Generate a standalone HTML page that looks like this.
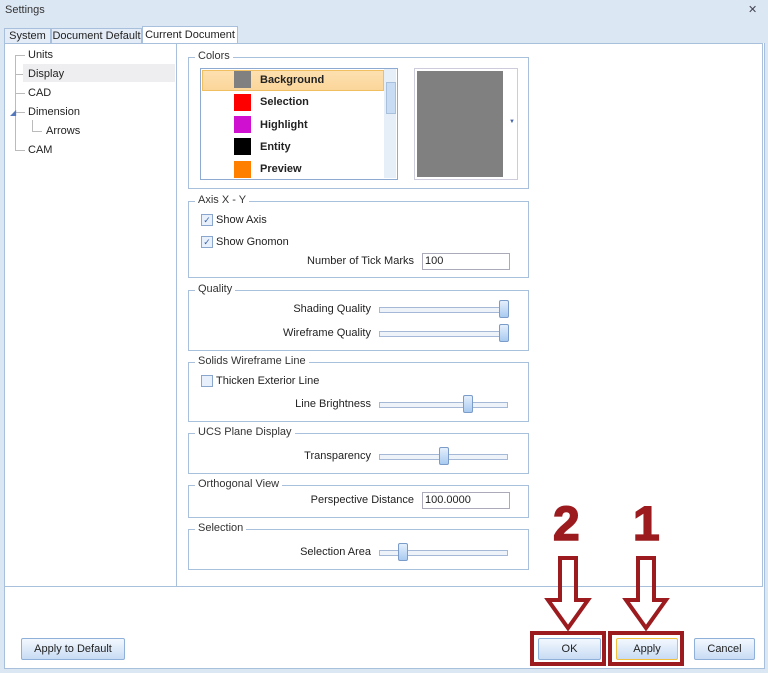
<!DOCTYPE html><html><head><style>
body{margin:0;width:768px;height:673px;position:relative;background:#fff;font-family:"Liberation Sans",sans-serif;font-size:11px;color:#222;overflow:hidden}
.a{position:absolute}
.grp{position:absolute;border:1px solid #a9c0dd;left:188px;width:339px}
.grp .t{position:absolute;top:-8px;left:6px;background:#fff;padding:0 3px;color:#333}
.trk{position:absolute;height:4px;border:1px solid #a5b9d6;background:#eef3fa;width:127px;left:379px}
.th{position:absolute;width:8px;height:16px;border:1px solid #7b9cc8;border-radius:2px;background:linear-gradient(#e4effc,#a9caf0)}
.lbl{position:absolute;text-align:right;width:200px}
.btn{position:absolute;height:20px;border:1px solid #8fb0d8;border-radius:2px;background:linear-gradient(#f3f8fe,#c8dcf4);text-align:center;line-height:20px;font-size:11px}
.cb{position:absolute;width:10px;height:10px;border:1px solid #8aa6cc;background:#e8f0fb;font-size:9px;line-height:10px;text-align:center;color:#3a63a8}
.sw{position:absolute;left:234px;width:17px;height:17px}
.it{position:absolute;left:260px;font-weight:bold}
.rb{position:absolute;border:4px solid #9b1b1f}
.num{position:absolute;font-size:48px;font-weight:bold;color:#9b1b1f;line-height:46px;-webkit-text-stroke:1.5px #9b1b1f}
</style></head><body>
<div class="a" style="left:0;top:0;width:768px;height:673px;background:#dce7f4"></div>
<div class="a" style="left:5px;top:4px;color:#333">Settings</div>
<div class="a" style="left:748px;top:3px;color:#445">✕</div>
<div class="a" style="left:4px;top:28px;width:45px;height:14px;border:1px solid #a9c0dd;background:#e4ecf7;text-align:center;line-height:14px">System</div>
<div class="a" style="left:51px;top:28px;width:89px;height:14px;border:1px solid #a9c0dd;background:#e4ecf7;text-align:center;line-height:14px">Document Default</div>
<div class="a" style="left:142px;top:26px;width:94px;height:17px;border:1px solid #a9c0dd;border-bottom:none;background:#fff;text-align:center;line-height:17px">Current Document</div>
<div class="a" style="left:4px;top:43px;width:759px;height:625px;background:#fff;border:1px solid #a9c0dd;border-top:none"></div>
<div class="a" style="left:4px;top:43px;width:759px;height:544px;border:1px solid #a9c0dd;box-sizing:border-box"></div>
<div class="a" style="left:176px;top:43px;width:1px;height:544px;background:#a9c0dd"></div>
<div class="a" style="left:15px;top:55px;width:1px;height:96px;background:#bbb"></div>
<div class="a" style="left:15px;top:55px;width:10px;height:1px;background:#bbb"></div>
<div class="a" style="left:15px;top:74px;width:10px;height:1px;background:#bbb"></div>
<div class="a" style="left:15px;top:93px;width:10px;height:1px;background:#bbb"></div>
<div class="a" style="left:15px;top:112px;width:10px;height:1px;background:#bbb"></div>
<div class="a" style="left:15px;top:150px;width:10px;height:1px;background:#bbb"></div>
<div class="a" style="left:32px;top:120px;width:1px;height:12px;background:#bbb"></div>
<div class="a" style="left:32px;top:131px;width:10px;height:1px;background:#bbb"></div>
<div class="a" style="left:10px;top:108px;color:#5577bb;font-size:8px">◢</div>
<div class="a" style="left:23px;top:64px;width:152px;height:18px;background:#eeeef0"></div>
<div class="a" style="left:28px;top:49px">Units</div>
<div class="a" style="left:28px;top:68px">Display</div>
<div class="a" style="left:28px;top:87px">CAD</div>
<div class="a" style="left:28px;top:106px">Dimension</div>
<div class="a" style="left:46px;top:125px">Arrows</div>
<div class="a" style="left:28px;top:144px">CAM</div>
<div class="grp" style="top:57px;height:130px"><span class="t">Colors</span></div>
<div class="a" style="left:200px;top:68px;width:196px;height:110px;border:1px solid #8faad0"></div>
<div class="a" style="left:202px;top:70px;width:180px;height:19px;background:linear-gradient(#fde0b0,#fbd69a);border:1px solid #f0c060"></div>
<div class="a" style="left:384px;top:69px;width:12px;height:109px;background:#e6eef8"></div>
<div class="a" style="left:386px;top:82px;width:8px;height:30px;background:#c8dcf4;border:1px solid #a9c0dd"></div>
<div class="sw" style="top:71px;background:#808080"></div><div class="it" style="top:74px">Background</div>
<div class="sw" style="top:94px;background:#f00"></div><div class="it" style="top:96px">Selection</div>
<div class="sw" style="top:116px;background:#d010d0"></div><div class="it" style="top:119px">Highlight</div>
<div class="sw" style="top:138px;background:#000"></div><div class="it" style="top:141px">Entity</div>
<div class="sw" style="top:161px;background:#ff8000"></div><div class="it" style="top:163px">Preview</div>
<div class="a" style="left:414px;top:68px;width:102px;height:110px;border:1px solid #ccd"></div>
<div class="a" style="left:417px;top:71px;width:86px;height:106px;background:#808080"></div>
<div class="a" style="left:509px;top:119px;font-size:6px;color:#4466aa">▼</div>
<div class="grp" style="top:201px;height:75px"><span class="t">Axis X - Y</span></div>
<div class="cb" style="left:201px;top:214px">✓</div><div class="a" style="left:216px;top:214px">Show Axis</div>
<div class="cb" style="left:201px;top:236px">✓</div><div class="a" style="left:216px;top:236px">Show Gnomon</div>
<div class="lbl" style="left:214px;top:255px">Number of Tick Marks</div>
<div class="a" style="left:422px;top:253px;width:84px;height:15px;border:1px solid #aab;line-height:15px;padding-left:2px">100</div>
<div class="grp" style="top:290px;height:59px"><span class="t">Quality</span></div>
<div class="lbl" style="left:171px;top:303px">Shading Quality</div>
<div class="trk" style="top:307px"></div><div class="th" style="left:499px;top:300px"></div>
<div class="lbl" style="left:171px;top:327px">Wireframe Quality</div>
<div class="trk" style="top:331px"></div><div class="th" style="left:499px;top:324px"></div>
<div class="grp" style="top:362px;height:58px"><span class="t">Solids Wireframe Line</span></div>
<div class="cb" style="left:201px;top:375px"></div><div class="a" style="left:216px;top:375px">Thicken Exterior Line</div>
<div class="lbl" style="left:171px;top:398px">Line Brightness</div>
<div class="trk" style="top:402px"></div><div class="th" style="left:463px;top:395px"></div>
<div class="grp" style="top:433px;height:39px"><span class="t">UCS Plane Display</span></div>
<div class="lbl" style="left:171px;top:450px">Transparency</div>
<div class="trk" style="top:454px"></div><div class="th" style="left:439px;top:447px"></div>
<div class="grp" style="top:485px;height:31px"><span class="t">Orthogonal View</span></div>
<div class="lbl" style="left:214px;top:494px">Perspective Distance</div>
<div class="a" style="left:422px;top:492px;width:84px;height:15px;border:1px solid #aab;line-height:15px;padding-left:2px">100.0000</div>
<div class="grp" style="top:529px;height:39px"><span class="t">Selection</span></div>
<div class="lbl" style="left:171px;top:546px">Selection Area</div>
<div class="trk" style="top:550px"></div><div class="th" style="left:398px;top:543px"></div>
<div class="btn" style="left:21px;top:638px;width:102px">Apply to Default</div>
<div class="btn" style="left:538px;top:638px;width:61px">OK</div>
<div class="btn" style="left:616px;top:638px;width:60px;border-color:#f0c040">Apply</div>
<div class="btn" style="left:694px;top:638px;width:59px">Cancel</div>
<div class="rb" style="left:530px;top:631px;width:68px;height:27px"></div>
<div class="rb" style="left:608px;top:631px;width:68px;height:27px"></div>
<div class="num" style="left:553px;top:502px">2</div>
<div class="num" style="left:633px;top:502px">1</div>
<svg class="a" style="left:0;top:0" width="768" height="673"><g fill="none" stroke="#9b1b1f" stroke-width="4">
<path d="M560,558 H576 V600 H588 L568,628 L548,600 H560 Z"/>
<path d="M638,558 H654 V600 H666 L646,628 L626,600 H638 Z"/></g></svg>
</body></html>
